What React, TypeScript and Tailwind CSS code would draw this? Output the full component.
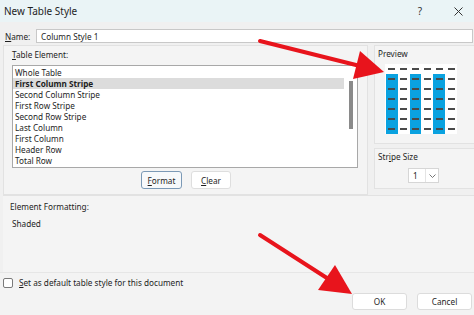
import React from 'react';

const elements = [
  'Whole Table',
  'First Column Stripe',
  'Second Column Stripe',
  'First Row Stripe',
  'Second Row Stripe',
  'Last Column',
  'First Column',
  'Header Row',
  'Total Row',
];

function PreviewGrid() {
  const rows = Array.from({ length: 7 });
  const cols = Array.from({ length: 6 });
  return (
    <div className="w-[72px] h-[70px] bg-white pl-[1px] grid grid-cols-6 grid-rows-7">
      {rows.map((_, r) =>
        cols.map((_, c) => (
          <div
            key={`${r}-${c}`}
            className={`flex items-center justify-center ${
              r > 0 && c % 2 === 0 ? 'bg-[#0aa2e0]' : ''
            }`}
          >
            <div className="w-[7px] h-[2px] bg-[#4a4a4a]" />
          </div>
        ))
      )}
    </div>
  );
}

export default function App() {
  return (
    <div className="relative w-[474px] h-[315px] overflow-hidden bg-[#f0f0f0] text-[8.2px] leading-[11px] text-[#1e1e1e] font-['Noto_Sans',sans-serif]">
      {/* title bar */}
      <div className="h-[22px] flex items-center bg-[#eaf4f6] pl-[4px] pr-[10px]">
        <span className="text-[10px] flex-1">New Table Style</span>
        <span className="text-[10px] text-[#333] mr-[32px]">?</span>
        <svg width="9" height="9" viewBox="0 0 9 9" className="mr-[1px]">
          <path d="M0.5 0.5 L8.5 8.5 M8.5 0.5 L0.5 8.5" stroke="#333" strokeWidth="1" />
        </svg>
      </div>

      {/* name */}
      <div className="flex items-center mt-[7px] h-[14px]">
        <span className="w-[36px] pl-[5px]">
          <u>N</u>ame:
        </span>
        <div className="flex-1 h-[14px] bg-white border border-[#c8c8c8] flex items-center pl-[4px] mr-[1px]">
          Column Style 1
        </div>
      </div>

      {/* groups */}
      <div className="flex mt-[2px] pl-[3px]">
        <div className="w-[365px] h-[150px] bg-[#f4f4f4] border border-[#e2e2e2] flex flex-col pl-[8px] pt-[3px]">
          <span className="h-[16px]">
            <u>T</u>able Element:
          </span>
          <div className="w-[346px] h-[103px] bg-white border border-[#a8a8a8] flex">
            <div className="flex-1 flex flex-col pt-[1px]">
              {elements.map((e) => (
                <div
                  key={e}
                  className={`h-[11px] pl-[2px] flex items-center ${
                    e === 'First Column Stripe' ? 'bg-[#dcdcdc] font-bold' : ''
                  }`}
                >
                  {e}
                </div>
              ))}
            </div>
            <div className="w-[13px] flex justify-center pt-[15px]">
              <div className="w-[4px] h-[48px] bg-[#8a8a8a]" />
            </div>
          </div>
          <div className="flex gap-[9px] pl-[129px] mt-[3px]">
            <div className="w-[41px] h-[18px] bg-[#f7f9fb] border-[1.5px] border-[#7b99b6] rounded-[3px] flex items-center justify-center">
              <span>
                <u>F</u>ormat
              </span>
            </div>
            <div className="w-[40px] h-[18px] bg-white border border-[#dedede] rounded-[3px] flex items-center justify-center">
              <span>
                <u>C</u>lear
              </span>
            </div>
          </div>
        </div>

        <div className="ml-[6px] flex-1 flex flex-col gap-[4px]">
          <div className="h-[99px] bg-[#f4f4f4] border border-[#e2e2e2] border-r-0 pl-[3px] pt-[2px]">
            <div className="h-[16px]">Preview</div>
            <div className="pl-[7px]">
              <PreviewGrid />
            </div>
          </div>
          <div className="h-[41px] bg-[#f4f4f4] border border-[#e2e2e2] border-r-0 pl-[3px] pt-[2px]">
            <div className="h-[17px]">
              Str<u>i</u>pe Size
            </div>
            <div className="ml-[30px] w-[31px] h-[15px] bg-white border border-[#d6d6d6] flex items-center">
              <span className="w-[16px] pl-[4px]">1</span>
              <div className="flex-1 h-full border-l border-[#e4e4e4] flex items-center justify-center">
                <svg width="7" height="4" viewBox="0 0 7 4">
                  <path d="M0.5 0.5 L3.5 3.5 L6.5 0.5" stroke="#666" strokeWidth="0.9" fill="none" />
                </svg>
              </div>
            </div>
          </div>
        </div>
      </div>

      {/* element formatting */}
      <div className="ml-[3px] h-[77px] bg-[#f4f4f4] border-t border-[#e2e2e2] pl-[7px] pt-[5px]">
        <div className="h-[17px]">Element Formatting:</div>
        <div className="pl-[2px]">Shaded</div>
      </div>

      {/* bottom */}
      <div className="border-t border-[#e6e6e6] bg-[#f3f3f3] h-[43px]">
        <div className="flex items-center gap-[6px] pl-[3px] mt-[4px] h-[11px]">
          <div className="w-[10px] h-[10px] bg-white border border-[#7a7a7a] rounded-[2px]" />
          <span>
            <u>S</u>et as default table style for this document
          </span>
        </div>
        <div className="flex justify-end gap-[10px] pr-[2px] mt-[5px]">
          <div className="w-[55px] h-[17px] bg-white border border-[#dcdcdc] rounded-[3px] flex items-center justify-center">
            OK
          </div>
          <div className="w-[55px] h-[17px] bg-white border border-[#dcdcdc] rounded-[3px] flex items-center justify-center">
            Cancel
          </div>
        </div>
      </div>

      {/* red arrows */}
      <svg className="absolute inset-0 pointer-events-none" width="474" height="315" viewBox="0 0 474 315">
        <line x1="260" y1="41" x2="360" y2="66" stroke="#e8141c" strokeWidth="4" strokeLinecap="round" />
        <polygon points="384,72 353,79 360,51" fill="#e8141c" />
        <line x1="260" y1="235" x2="330" y2="280" stroke="#e8141c" strokeWidth="4" strokeLinecap="round" />
        <polygon points="352,294 318,290 335,265" fill="#e8141c" />
      </svg>
    </div>
  );
}
